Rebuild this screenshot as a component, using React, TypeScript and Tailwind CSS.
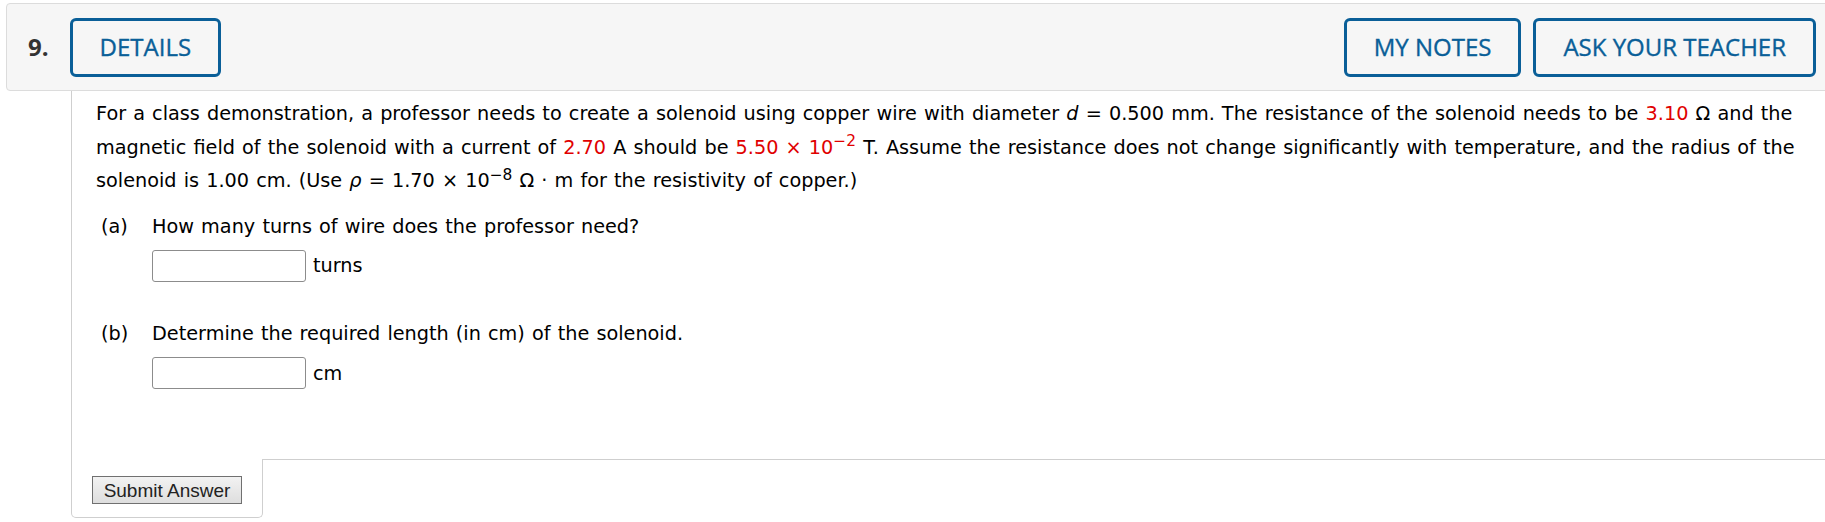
import React from 'react';

const red = 'text-[#e00000]';

const HeaderButton = ({ label }: { label: string }) => (
  <button className="h-[59px] px-[27px] border-[3px] border-[#0a5f98] rounded-[6px] text-[#0a5f98] text-[24px] leading-none font-['Open_Sans',sans-serif] [-webkit-text-stroke:0.35px_#0a5f98] bg-[#f6f6f6]">
    {label}
  </button>
);

const Answer = ({ unit }: { unit: string }) => (
  <div className="flex items-center mt-[6px] pl-[56px]">
    <input
      type="text"
      className="w-[154px] h-[32px] border border-[#8c8c8c] rounded-[3px] bg-white outline-none"
    />
    <span className="ml-[7px]">{unit}</span>
  </div>
);

const Part = ({ label, question }: { label: string; question: string }) => (
  <div className="flex pl-[5px]">
    <span className="w-[51px]">{label}</span>
    <span>{question}</span>
  </div>
);

export default function App() {
  return (
    <div className="w-full h-[522px] overflow-hidden bg-white pl-[6px] pt-[3px]">
      <div className="w-[1832px]">
        {/* question header */}
        <div className="h-[88px] flex items-center justify-between pl-[21px] pr-[21px] bg-[#f6f6f6] border border-[#dcdcdc] rounded-[4px]">
          <div className="flex items-center gap-[21px]">
            <span className="text-[24px] font-bold text-[#333] font-['Open_Sans',sans-serif]">9.</span>
            <HeaderButton label="DETAILS" />
          </div>
          <div className="flex items-center gap-[12px]">
            <HeaderButton label="MY NOTES" />
            <HeaderButton label="ASK YOUR TEACHER" />
          </div>
        </div>

        {/* question body */}
        <div className="ml-[65px] border-l border-r border-[#cfcfcf] pl-[24px] pr-[24px] pt-[6px] pb-[69px] text-[19.25px] leading-[33.6px] [word-spacing:1px] text-black font-['DejaVu_Sans',Verdana,sans-serif]">
          <p>
            For a class demonstration, a professor needs to create a solenoid using copper wire with diameter{' '}
            <i>d</i> = 0.500 mm. The resistance of the solenoid needs to be <span className={red}>3.10</span> Ω and the
            magnetic field of the solenoid with a current of <span className={red}>2.70</span> A should be{' '}
            <span className={red}>
              5.50 × 10<sup className="text-[80%]">−2</sup>
            </span>{' '}
            T. Assume the resistance does not change significantly with temperature, and the radius of the solenoid
            is 1.00 cm. (Use <i>ρ</i> = 1.70 × 10<sup className="text-[80%]">−8</sup> Ω · m for the resistivity of
            copper.)
          </p>

          <div className="mt-[12px]">
            <Part label="(a)" question="How many turns of wire does the professor need?" />
            <Answer unit="turns" />
          </div>

          <div className="mt-[34px]">
            <Part label="(b)" question="Determine the required length (in cm) of the solenoid." />
            <Answer unit="cm" />
          </div>
        </div>

        {/* submit tab */}
        <div className="ml-[65px] flex">
          <div className="w-[192px] h-[59px] border-l border-r border-b border-[#cfcfcf] rounded-b-[5px] pl-[20px] pt-[17px]">
            <button className="w-[150px] h-[28px] border border-[#707070] bg-gradient-to-b from-[#f2f2f2] to-[#dedede] text-[19px] leading-none text-[#222] font-['Liberation_Sans',Arial,sans-serif]">
              Submit Answer
            </button>
          </div>
          <div className="flex-1 border-t border-[#cfcfcf]" />
        </div>
      </div>
    </div>
  );
}
